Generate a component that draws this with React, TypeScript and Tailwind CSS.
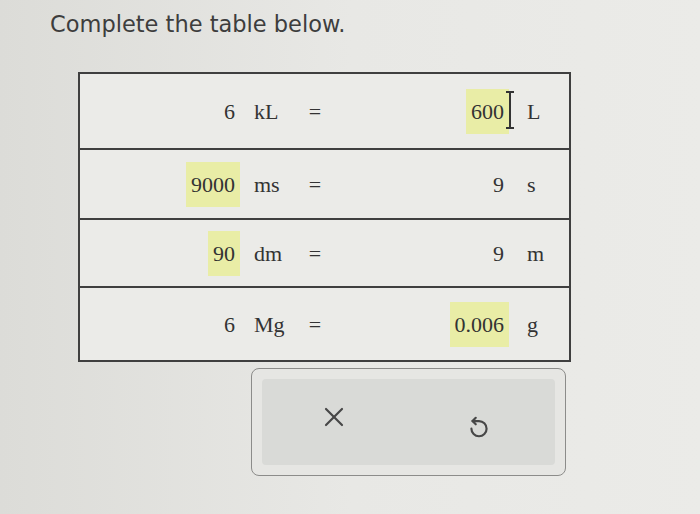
import { X } from 'lucide-react';

const rows = [
  { left: '6', leftUnit: 'kL', right: '600', rightUnit: 'L', hiLeft: false, hiRight: true, h: 'h-[74px]' },
  { left: '9000', leftUnit: 'ms', right: '9', rightUnit: 's', hiLeft: true, hiRight: false, h: 'h-[70px]' },
  { left: '90', leftUnit: 'dm', right: '9', rightUnit: 'm', hiLeft: true, hiRight: false, h: 'h-[68px]' },
  { left: '6', leftUnit: 'Mg', right: '0.006', rightUnit: 'g', hiLeft: false, hiRight: true, h: 'h-[74px]' },
];

const Value = ({ text, hi }: { text: string; hi: boolean }) => (
  <span className={hi ? 'bg-[#e9eda6] px-[5px] py-[6px]' : 'px-[5px]'}>{text}</span>
);

const UndoIcon = () => (
  <svg width="26" height="26" viewBox="0 0 24 24" fill="none" stroke="#474747" strokeWidth="2" strokeLinecap="round" strokeLinejoin="round">
    <path d="M9 3.5 6 6.5l3 3" />
    <path d="M6 6.5h6a7 7 0 1 1-7 7" />
  </svg>
);

export default function App() {
  return (
    <div className="w-[700px] h-[514px] overflow-hidden bg-gradient-to-r from-[#dcdcd8] via-[#e8e8e5] to-[#ebebe8] text-[#333]">
      <h1 className="pl-[50px] pt-[8px] text-[22.5px] leading-[32px] text-[#3d3d3d] font-['DejaVu_Sans',sans-serif]">
        Complete the table below.
      </h1>

      <div className="ml-[78px] mt-[32px] w-[493px] border-2 border-[#3f3f3f] bg-[#ebebe8] font-['Liberation_Serif',serif] text-[22px]">
        {rows.map((r, i) => (
          <div
            key={i}
            className={`relative flex items-center ${r.h} ${i > 0 ? 'border-t-2 border-[#3f3f3f]' : ''}`}
          >
            <div className="w-[160px] flex justify-end">
              <Value text={r.left} hi={r.hiLeft} />
            </div>
            <div className="w-[64px] pl-[14px]">{r.leftUnit}</div>
            <div className="w-[22px] text-center">=</div>
            <div className="w-[183px] flex justify-end">
              <Value text={r.right} hi={r.hiRight} />
            </div>
            <div className="pl-[18px]">{r.rightUnit}</div>
            {i === 0 && (
              <svg className="absolute left-[425px] top-[16px]" width="10" height="40" viewBox="0 0 10 40">
                <path d="M1 2h8M5 2v36M1 38h8" stroke="#333" strokeWidth="2" fill="none" />
              </svg>
            )}
          </div>
        ))}
      </div>

      <div className="ml-[251px] mt-[6px] w-[315px] h-[108px] rounded-[8px] border-[1.5px] border-[#8c8c8a] bg-[#e6e6e3] p-[10px]">
        <div className="h-full rounded-[4px] bg-[#d9dad7] flex items-center">
          <div className="w-[144px] flex justify-center pb-[10px]">
            <X className="w-[32px] h-[32px] text-[#474747]" strokeWidth={1.6} />
          </div>
          <div className="w-[146px] flex justify-center pt-[10px]">
            <UndoIcon />
          </div>
        </div>
      </div>
    </div>
  );
}
